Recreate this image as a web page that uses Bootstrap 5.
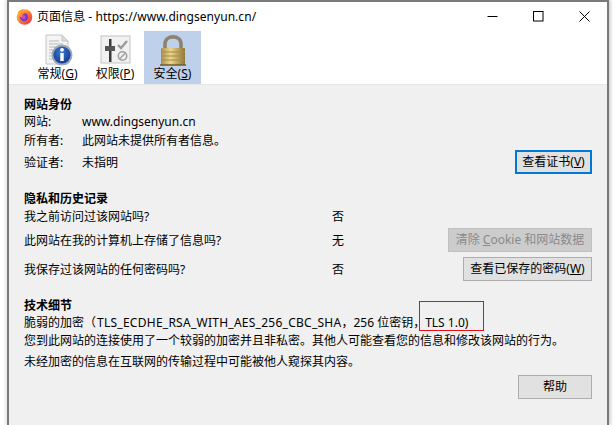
<!DOCTYPE html>
<html lang="zh-CN">
<head>
<meta charset="utf-8">
<title>页面信息</title>
<link href="https://cdn.jsdelivr.net/npm/bootstrap@5.3.0/dist/css/bootstrap.min.css" rel="stylesheet">
<style>
html,body{width:616px;height:425px;overflow:hidden;margin:0;background:#fff}
body{font-family:"Noto Sans","Noto Sans CJK SC",sans-serif;font-size:12px;line-height:17px;color:#000;padding:0 7px 0 7px}
.pg-win{width:602px;height:425px;border-style:solid;border-color:#7a7a7a;border-width:2px 2px 0 2px;box-shadow:2px 0 3px rgba(0,0,0,.18),-2px 0 3px rgba(0,0,0,.1);background:#fff;position:relative}
.pg-title{height:29px;padding-left:7px;font-size:12px;gap:4px}
.pg-title-text{letter-spacing:.05px}
.pg-ctl{width:46px;height:29px}
.pg-tools{height:53px;padding-left:20px}
.pg-tab{height:53px;padding-top:2px;text-align:center;font-size:12px;line-height:14px;white-space:nowrap}
.pg-tab svg{display:block;margin:0 auto}
.pg-t1{width:57px}.pg-t2{width:58px}.pg-t3{width:57px;background:#bfd0ea}
.pg-main{height:341px;background:#f0f0f0;border-top:1px solid #e6e6e6;padding:11px 15px 0 15px}
.pg-head{font-weight:700;height:17px}
.pg-lab{width:58px}
.pg-q{width:308px}
.pg-cipher{letter-spacing:.26px;margin-left:1px}
.pg-btn{font-size:12px;line-height:16px;padding:0;height:24px;border-radius:0;border:1px solid #adadad;background:#e1e1e1;color:#000;white-space:nowrap}
.pg-btn:hover{background:#e1e1e1;color:#000}
.pg-btn-focus{border:2px solid #0078d7;width:77px}
.pg-btn-off,.pg-btn-off:disabled{background:#cccccc;border-color:#bfbfbf;color:#8a8a8a;opacity:1;width:144px}
.pg-btn-save{width:129px}
.pg-btn-help{width:74px}
.pg-mark{position:absolute;left:410px;top:299px;width:65px;height:30px;border:1px solid #ea0d18}
</style>
</head>
<body>
<div class="pg-win">
  <div class="pg-title d-flex align-items-center">
    <svg width="17" height="17" viewBox="0 0 17 17"><defs><linearGradient id="ff" x1="0" y1="0" x2="1" y2="1"><stop offset="0" stop-color="#ffd23a"/><stop offset=".5" stop-color="#ff7a2e"/><stop offset="1" stop-color="#e8234f"/></linearGradient></defs><circle cx="8.500" cy="9" r="7.800" fill="url(#ff)"/><path d="M2 5 C3 2 6 1 8 1 C6.500 2.500 5.500 3.500 5 5 C3.500 5 2.500 5 2 5Z" fill="#ff9a2e"/><circle cx="8" cy="9" r="4.200" fill="#7b3bc4"/><circle cx="7.500" cy="9" r="2.100" fill="#c84bd0"/><path d="M3 8 C4 5 8 3.500 11 5 C8 5 6 6.500 6 9 C4.500 9.500 3.500 9 3 8Z" fill="#ff8a2a"/></svg>
    <span class="pg-title-text flex-grow-1">页面信息 - https://www.dingsenyun.cn/</span>
    <div class="d-flex">
      <div class="pg-ctl d-flex align-items-center justify-content-center"><svg width="11" height="11" viewBox="0 0 11 11"><path d="M0.500 5.500H10.500" stroke="#000" fill="none"/></svg></div>
      <div class="pg-ctl d-flex align-items-center justify-content-center"><svg width="11" height="11" viewBox="0 0 11 11"><rect x=".5" y=".5" width="9.500" height="9.500" stroke="#000" fill="none"/></svg></div>
      <div class="pg-ctl d-flex align-items-center justify-content-center"><svg width="11" height="11" viewBox="0 0 11 11"><path d="M.5 .5L10.500 10.500M10.500 .5L.5 10.500" stroke="#000" fill="none"/></svg></div>
    </div>
  </div>
  <div class="pg-tools d-flex">
    <div class="pg-tab pg-t1">
      <svg width="34" height="34" viewBox="0 0 34 34"><defs><radialGradient id="ib" cx=".45" cy=".35" r=".7"><stop offset="0" stop-color="#3a78d0"/><stop offset="1" stop-color="#12378c"/></radialGradient></defs><path d="M5 2H21L27 8V31H5Z" fill="#f4f4f4" stroke="#c4c4c4"/><path d="M21 2V8H27Z" fill="#dcdcdc" stroke="#c4c4c4"/><path d="M8 8H18M8 11H22M8 14H22M8 17H14M8 20H13M8 23H13M8 26H14" stroke="#b9b9b9"/><circle cx="21" cy="22" r="10.500" fill="#9fa8b8"/><circle cx="21" cy="22" r="8.600" fill="url(#ib)"/><rect x="19.300" y="20" width="3.400" height="8" fill="#fff"/><circle cx="21" cy="16.800" r="1.900" fill="#fff"/></svg>
      常规(<u>G</u>)
    </div>
    <div class="pg-tab pg-t2">
      <svg width="34" height="34" viewBox="0 0 34 34"><rect x="3" y="3" width="29" height="27" fill="#f1f1f1" stroke="#c4c4c4"/><rect x="11" y="6" width="2.500" height="23" fill="#3a3a3a"/><rect x="7" y="13" width="10" height="5" fill="#555"/><path d="M20 12L23 15L29 8" stroke="#9a9a9a" stroke-width="2.400" fill="none"/><circle cx="24.500" cy="23" r="4.200" stroke="#a0a0a0" stroke-width="1.500" fill="none"/><path d="M21.500 26L27.500 20" stroke="#a0a0a0" stroke-width="1.500"/></svg>
      权限(<u>P</u>)
    </div>
    <div class="pg-tab pg-t3">
      <svg width="34" height="34" viewBox="0 0 34 34"><defs><linearGradient id="lk" x1="0" y1="0" x2="1" y2="0"><stop offset="0" stop-color="#a98f4c"/><stop offset=".4" stop-color="#ecd68c"/><stop offset="1" stop-color="#8f7534"/></linearGradient></defs><path d="M9 17V11C9 1.500 25 1.500 25 11V17" fill="none" stroke="#8c8470" stroke-width="3.600"/><rect x="5" y="15" width="24" height="17" rx="1" fill="url(#lk)"/><path d="M5 19H29M5 23H29M5 27H29" stroke="#a58c48"/><path d="M4 32H30" stroke="#6e5d2c" stroke-width="1.500"/></svg>
      安全(<u>S</u>)
    </div>
  </div>
  <div class="pg-main">
    <div class="pg-head">网站身份</div>
    <div class="d-flex"><div class="pg-lab">网站:</div><div>www.dingsenyun.cn</div></div>
    <div class="d-flex" style="margin-top:2px"><div class="pg-lab">所有者:</div><div>此网站未提供所有者信息。</div></div>
    <div class="d-flex align-items-center justify-content-between" style="margin-top:1px;height:24px">
      <div class="d-flex"><div class="pg-lab">验证者:</div><div>未指明</div></div>
      <button class="btn pg-btn pg-btn-focus" type="button">查看证书(<u>V</u>)</button>
    </div>
    <div class="pg-head" style="margin-top:16px">隐私和历史记录</div>
    <div class="d-flex" style="margin-top:1px"><div class="pg-q">我之前访问过该网站吗?</div><div>否</div></div>
    <div class="d-flex align-items-center justify-content-between" style="margin-top:3px;height:24px">
      <div class="d-flex"><div class="pg-q">此网站在我的计算机上存储了信息吗?</div><div>无</div></div>
      <button class="btn pg-btn pg-btn-off" type="button" disabled>清除 <u>C</u>ookie 和网站数据</button>
    </div>
    <div class="d-flex align-items-center justify-content-between" style="margin-top:5px;height:24px">
      <div class="d-flex"><div class="pg-q">我保存过该网站的任何密码吗?</div><div>否</div></div>
      <button class="btn pg-btn pg-btn-save" type="button">查看已保存的密码(<u>W</u>)</button>
    </div>
    <div class="pg-head" style="margin-top:16px">技术细节</div>
    <div>脆弱的加密（<span class="pg-cipher">TLS_ECDHE_RSA_WITH_AES_256_CBC_SHA</span>，256 位密钥，TLS 1.0)</div>
    <div style="margin-top:1px">您到此网站的连接使用了一个较弱的加密并且非私密。其他人可能查看您的信息和修改该网站的行为。</div>
    <div style="margin-top:4px">未经加密的信息在互联网的传输过程中可能被他人窥探其内容。</div>
    <div class="d-flex justify-content-end" style="margin-top:5px"><button class="btn pg-btn pg-btn-help" type="button">帮助</button></div>
  </div>
  <div class="pg-mark"></div>
</div>
</body>
</html>
